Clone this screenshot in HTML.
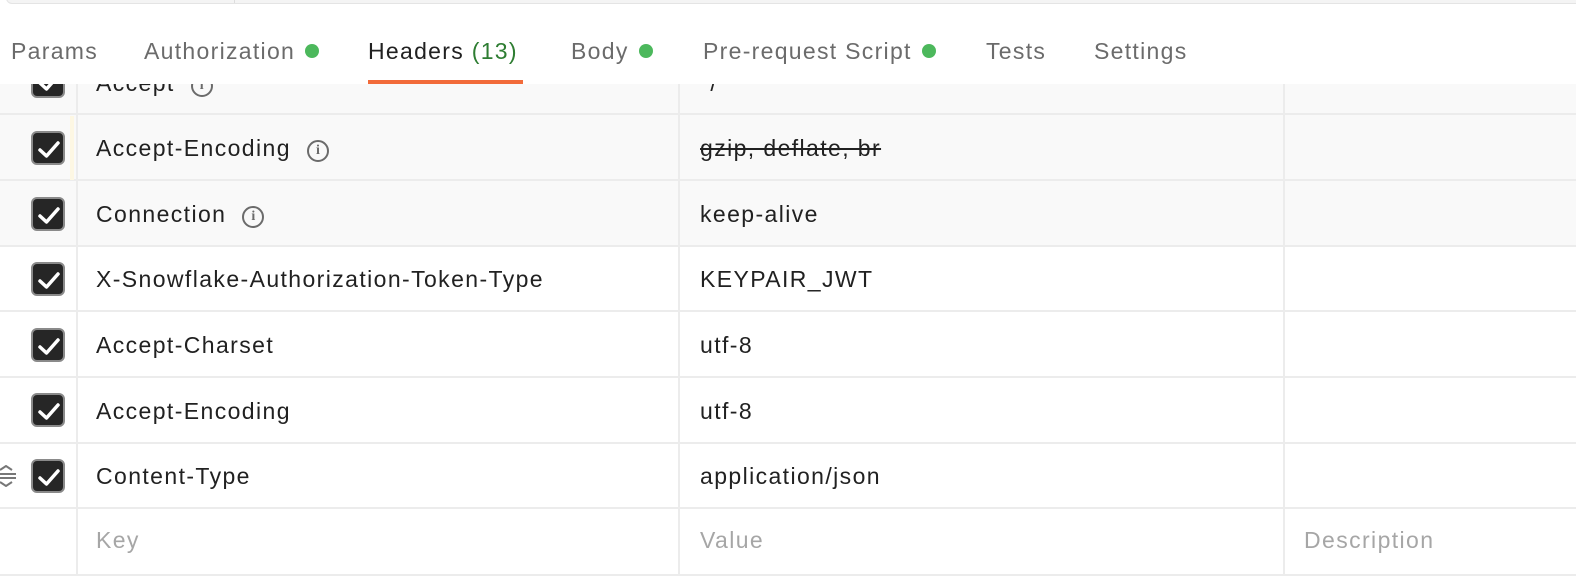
<!DOCTYPE html>
<html><head><style>
body{margin:0;width:1576px;height:585px;overflow:hidden;background:#fff;font-family:"Liberation Sans",sans-serif;position:relative}
.top{position:absolute;left:6px;top:-10px;width:1600px;height:12px;border:1px solid #e4e4e4;border-radius:6px;background:#f4f4f4}
.top i{position:absolute;left:227px;top:0;bottom:0;border-left:1px solid #ddd}
.tabs{position:absolute;left:0;top:0;width:1576px;height:84px;background:#fff;z-index:2}
.tab{position:absolute;top:38px;font-size:23px;letter-spacing:1.3px;color:#6b6b6b;white-space:nowrap}
.dot{display:inline-block;width:14px;height:14px;border-radius:50%;background:#4cb85c;margin-left:10px;vertical-align:1px}
.row{position:absolute;left:0;width:1576px;border-bottom:2px solid #ececec;box-sizing:border-box}
.vl{position:absolute;top:84px;bottom:9px;border-left:2px solid #ececec;z-index:1}
.cb{position:absolute;left:31px;width:34px;height:34px;box-sizing:border-box;background:#262626;border:2px solid #8a8a8a;border-radius:6px}
.cb svg{position:absolute;left:4px;top:5px}
.t{position:absolute;font-size:23px;letter-spacing:1.4px;color:#212121;white-space:nowrap}
.ph{color:#a6a6a6}
.info{display:inline-block;width:22px;height:22px;border:2px solid #6b6b6b;border-radius:50%;box-sizing:border-box;font-size:14px;text-align:center;line-height:18px;color:#6b6b6b;font-family:"Liberation Serif",serif;font-weight:bold;vertical-align:-1px;position:relative;top:-3px;margin-left:16px;letter-spacing:0}
</style></head><body>
<div class="tabs">
<div class="top"><i></i></div>
<div class="tab" style="left:11px">Params</div>
<div class="tab" style="left:144px">Authorization<span class="dot"></span></div>
<div class="tab" style="left:368px;color:#212121">Headers <span style="color:#2e7d32">(13)</span></div>
<div style="position:absolute;left:368px;top:80px;width:155px;height:4px;background:#f26b3a"></div>
<div class="tab" style="left:571px">Body<span class="dot"></span></div>
<div class="tab" style="left:703px">Pre-request Script<span class="dot"></span></div>
<div class="tab" style="left:986px">Tests</div>
<div class="tab" style="left:1094px">Settings</div>
</div>
<div class="row" style="top:48px;height:67px;background:#f9f9f9"></div>
<div class="row" style="top:115px;height:66px;background:#f9f9f9"></div>
<div class="row" style="top:181px;height:66px;background:#f9f9f9"></div>
<div class="row" style="top:247px;height:65px"></div>
<div class="row" style="top:312px;height:66px"></div>
<div class="row" style="top:378px;height:66px"></div>
<div class="row" style="top:444px;height:65px"></div>
<div class="row" style="top:509px;height:67px"></div>
<div class="vl" style="left:76px"></div><div class="vl" style="left:678px"></div><div class="vl" style="left:1283px"></div>
<div style="position:absolute;left:70px;top:116px;width:4px;height:64px;background:#fdf7e3"></div>
<svg width="0" height="0" style="position:absolute"><defs><path id="ck" d="M3 12 L9.5 18 L21 5" fill="none" stroke="#fff" stroke-width="3.5" stroke-linecap="round" stroke-linejoin="round"/></defs></svg>
<div class="cb" style="top:64px"><svg width="24" height="22"><use href="#ck"/></svg></div>
<div class="t" style="left:96px;top:70px">Accept<span class="info">i</span></div>
<div class="t" style="left:700px;top:70px">*/*</div>
<div style="position:absolute;left:0;top:0;width:1576px;height:84px;background:#fff;z-index:1"></div>

<div class="cb" style="top:131px"><svg width="24" height="22"><use href="#ck"/></svg></div>
<div class="t" style="left:96px;top:135px">Accept-Encoding<span class="info">i</span></div>
<div class="t" style="left:700px;top:135px;text-decoration:line-through">gzip, deflate, br</div>
<div class="cb" style="top:197px"><svg width="24" height="22"><use href="#ck"/></svg></div>
<div class="t" style="left:96px;top:201px">Connection<span class="info">i</span></div>
<div class="t" style="left:700px;top:201px">keep-alive</div>
<div class="cb" style="top:262px"><svg width="24" height="22"><use href="#ck"/></svg></div>
<div class="t" style="left:96px;top:266px">X-Snowflake-Authorization-Token-Type</div>
<div class="t" style="left:700px;top:266px">KEYPAIR_JWT</div>
<div class="cb" style="top:328px"><svg width="24" height="22"><use href="#ck"/></svg></div>
<div class="t" style="left:96px;top:332px">Accept-Charset</div>
<div class="t" style="left:700px;top:332px">utf-8</div>
<div class="cb" style="top:393px"><svg width="24" height="22"><use href="#ck"/></svg></div>
<div class="t" style="left:96px;top:398px">Accept-Encoding</div>
<div class="t" style="left:700px;top:398px">utf-8</div>
<svg style="position:absolute;left:0;top:465px" width="18" height="22"><path d="M0 5 L6 1 L12 5 M0 9 H16 M0 13 H16 M0 17 L6 21 L12 17" fill="none" stroke="#777" stroke-width="2"/></svg>
<div class="cb" style="top:459px"><svg width="24" height="22"><use href="#ck"/></svg></div>
<div class="t" style="left:96px;top:463px">Content-Type</div>
<div class="t" style="left:700px;top:463px">application/json</div>
<div class="t ph" style="left:96px;top:527px">Key</div>
<div class="t ph" style="left:700px;top:527px">Value</div>
<div class="t ph" style="left:1304px;top:527px">Description</div>
</body></html>
